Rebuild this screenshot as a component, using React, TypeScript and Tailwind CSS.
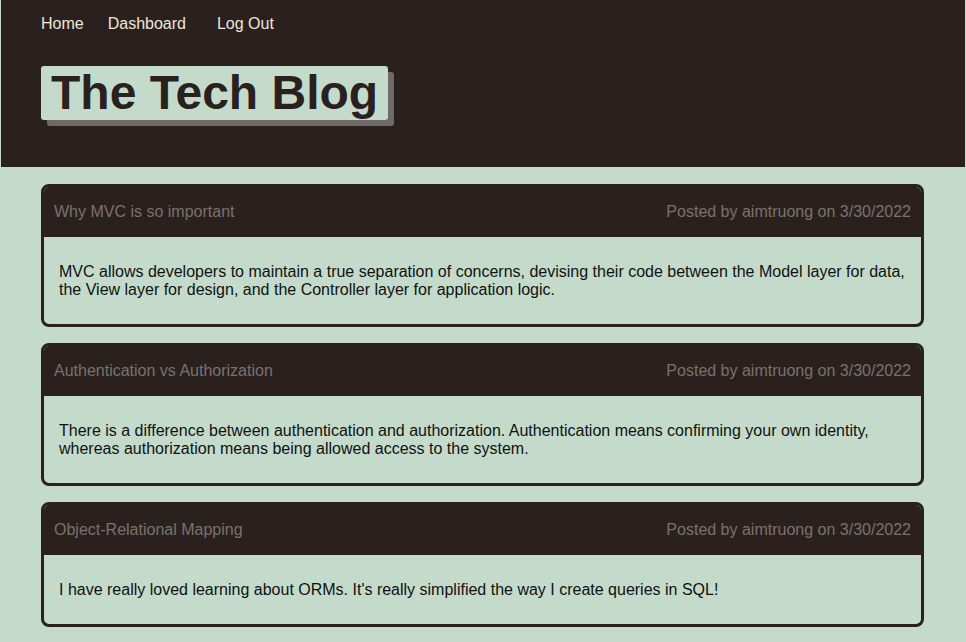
import React from 'react';

interface Post {
  title: string;
  author: string;
  date: string;
  body: string;
}

const posts: Post[] = [
  {
    title: 'Why MVC is so important',
    author: 'aimtruong',
    date: '3/30/2022',
    body: 'MVC allows developers to maintain a true separation of concerns, devising their code between the Model layer for data, the View layer for design, and the Controller layer for application logic.',
  },
  {
    title: 'Authentication vs Authorization',
    author: 'aimtruong',
    date: '3/30/2022',
    body: 'There is a difference between authentication and authorization. Authentication means confirming your own identity, whereas authorization means being allowed access to the system.',
  },
  {
    title: 'Object-Relational Mapping',
    author: 'aimtruong',
    date: '3/30/2022',
    body: "I have really loved learning about ORMs. It's really simplified the way I create queries in SQL!",
  },
];

const PostCard: React.FC<{ post: Post }> = ({ post }) => (
  <article className="rounded-lg border-[3px] border-[#2a211e] overflow-hidden">
    <div className="flex justify-between items-center bg-[#2a211e] px-[10px] h-[50px] text-[16px] text-[#7b716d]">
      <span>{post.title}</span>
      <span>
        Posted by {post.author} on {post.date}
      </span>
    </div>
    <div className="px-[15px] pt-[26px] pb-[25px] text-[16px] leading-[18px] text-[#111]">
      <p>{post.body}</p>
    </div>
  </article>
);

export default function App() {
  return (
    <div className="min-h-[642px] bg-[#c4dbcb] font-['Liberation_Sans',Arial,sans-serif]">
      {/* Header */}
      <header className="mx-px h-[167px] bg-[#2a211e] px-10 pt-[14px]">
        <nav className="flex text-[16px] leading-[20px] text-[#ece7dc]">
          <a href="#" className="mr-[24px]">Home</a>
          <a href="#" className="mr-[31px]">Dashboard</a>
          <a href="#">Log Out</a>
        </nav>
        <div className="mt-[32px] inline-block">
          <h1 className="rounded-[3px] bg-[#c4dbcb] px-[10px] h-[54px] flex items-center text-[48px] font-bold leading-none text-[#2a211e] shadow-[6px_6px_0_#6f6a69]">
            The Tech Blog
          </h1>
        </div>
      </header>

      {/* Posts */}
      <main className="flex flex-col gap-4 pl-[41px] pr-[42px] pt-[17px] pb-4">
        {posts.map((post) => (
          <PostCard key={post.title} post={post} />
        ))}
      </main>
    </div>
  );
}
